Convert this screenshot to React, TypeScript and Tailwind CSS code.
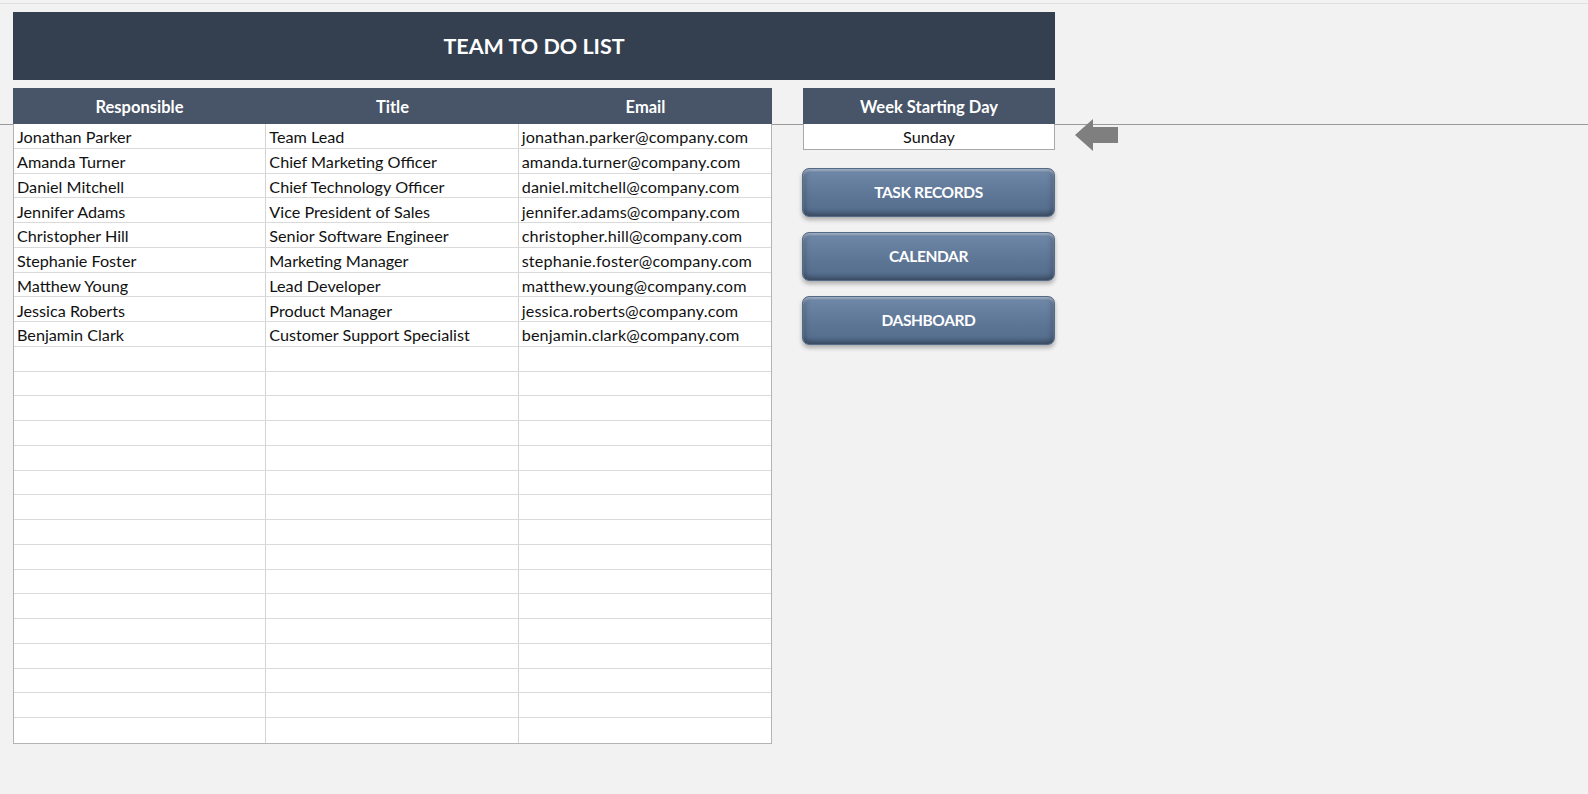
import React from "react";

const people = [
  ["Jonathan Parker", "Team Lead", "jonathan.parker@company.com"],
  ["Amanda Turner", "Chief Marketing Officer", "amanda.turner@company.com"],
  ["Daniel Mitchell", "Chief Technology Officer", "daniel.mitchell@company.com"],
  ["Jennifer Adams", "Vice President of Sales", "jennifer.adams@company.com"],
  ["Christopher Hill", "Senior Software Engineer", "christopher.hill@company.com"],
  ["Stephanie Foster", "Marketing Manager", "stephanie.foster@company.com"],
  ["Matthew Young", "Lead Developer", "matthew.young@company.com"],
  ["Jessica Roberts", "Product Manager", "jessica.roberts@company.com"],
  ["Benjamin Clark", "Customer Support Specialist", "benjamin.clark@company.com"],
];

const rows: string[][] = [...people];
while (rows.length < 25) rows.push(["", "", ""]);

function NavButton({ label }: { label: string }) {
  return (
    <button className="w-[253px] h-[49px] pt-[1px] rounded-[7px] bg-gradient-to-b from-[#7189a8] via-[#5f7898] to-[#526b8b] text-white font-bold text-[15.5px] tracking-tight shadow-[inset_0_2px_2px_rgba(255,255,255,0.35),inset_4px_0_4px_rgba(0,0,0,0.1),inset_-4px_0_4px_rgba(0,0,0,0.1),inset_0_-4px_4px_rgba(0,0,0,0.2),0_3px_4px_rgba(0,0,0,0.28)] border border-[#546b88]">
      {label}
    </button>
  );
}

export default function App() {
  return (
    <div
      className="relative w-[1588px] h-[794px] bg-[#f2f2f2] overflow-hidden"
      style={{ fontFamily: "Lato, 'Open Sans', sans-serif" }}
    >
      <div className="absolute left-0 right-0 top-[3px] h-px bg-[#e0e0e0]" />
      <div className="absolute left-0 right-0 top-[124px] h-px bg-[#9a9a9a]" />
      <div className="relative flex flex-col pt-[12px] pl-[13px]">
        <div className="w-[1042px] h-[68px] bg-[#344050] flex items-center justify-center text-white font-bold text-[21.5px]">
          TEAM TO DO LIST
        </div>
        <div className="flex mt-[8px]">
          <div className="w-[759px] flex flex-col">
            <div className="h-[36px] pt-[3px] bg-[#485568] grid grid-cols-3 text-white font-bold text-[16.5px]">
              <div className="flex items-center justify-center">Responsible</div>
              <div className="flex items-center justify-center">Title</div>
              <div className="flex items-center justify-center">Email</div>
            </div>
            <div className="bg-white border-l border-r border-b border-[#b4b4b4]">
              {rows.map((r, i) => (
                <div
                  key={i}
                  className="grid grid-cols-3 h-[24.75px] border-b border-[#dadada] last:border-b-0 text-[16.2px] text-[#111] leading-none"
                >
                  <div className="flex items-center pl-[3px] pt-[3px] border-r border-[#d4d4d4] whitespace-nowrap">{r[0]}</div>
                  <div className="flex items-center pl-[3px] pt-[3px] border-r border-[#d4d4d4] whitespace-nowrap">{r[1]}</div>
                  <div className="flex items-center pl-[3px] pt-[3px] whitespace-nowrap tracking-[0.01em]">{r[2]}</div>
                </div>
              ))}
            </div>
          </div>
          <div className="ml-[31px] flex flex-col">
            <div className="flex items-start">
              <div className="w-[252px] flex flex-col">
                <div className="h-[36px] pt-[3px] bg-[#485568] text-white font-bold text-[16.5px] flex items-center justify-center">
                  Week Starting Day
                </div>
                <div className="h-[26px] pt-[2px] bg-white border border-t-0 border-[#a8a8a8] flex items-center justify-center text-[16.2px] text-[#111]">
                  Sunday
                </div>
              </div>
              <svg className="ml-[20px] mt-[31px]" width="43" height="32" viewBox="0 0 43 32">
                <polygon points="0,16 18,0 18,8 43,8 43,24 18,24 18,32" fill="#7f7f7f" />
              </svg>
            </div>
            <div className="flex flex-col gap-[15px] mt-[17px] -ml-[1px]">
              <NavButton label="TASK RECORDS" />
              <NavButton label="CALENDAR" />
              <NavButton label="DASHBOARD" />
            </div>
          </div>
        </div>
      </div>
    </div>
  );
}
